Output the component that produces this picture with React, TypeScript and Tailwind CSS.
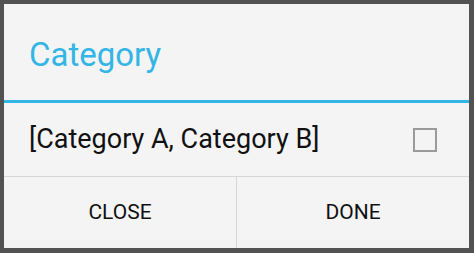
import React from 'react';

const App: React.FC = () => {
  return (
    <div
      className="w-[474px] h-[253px] bg-[#525252] pt-[4px] pl-[4px] pr-[5px] pb-[5px]"
      style={{ fontFamily: 'Roboto, "Liberation Sans", sans-serif' }}
    >
      <div className="h-full bg-[#f4f4f4] flex flex-col">
        {/* Title */}
        <div className="h-[96px] flex items-center pl-[25px] pt-[4px]">
          <span className="text-[33px] text-[#33b5e5] leading-none">Category</span>
        </div>
        <div className="h-[3px] bg-[#33b5e5]" />

        {/* Item row */}
        <div className="h-[73px] flex items-center justify-between pl-[25px] pr-[32px]">
          <span className="text-[27px] text-[#111] leading-none">[Category A, Category B]</span>
          <div className="w-[24px] h-[24px] border-2 border-[#9a9a9a]" />
        </div>
        <div className="h-px bg-[#d6d6d6]" />

        {/* Buttons */}
        <div className="flex-1 flex">
          <button className="flex-1 flex items-center justify-center text-[21px] text-[#111]">
            CLOSE
          </button>
          <div className="w-px bg-[#d6d6d6]" />
          <button className="flex-1 flex items-center justify-center text-[21px] text-[#111]">
            DONE
          </button>
        </div>
      </div>
    </div>
  );
};

export default App;
